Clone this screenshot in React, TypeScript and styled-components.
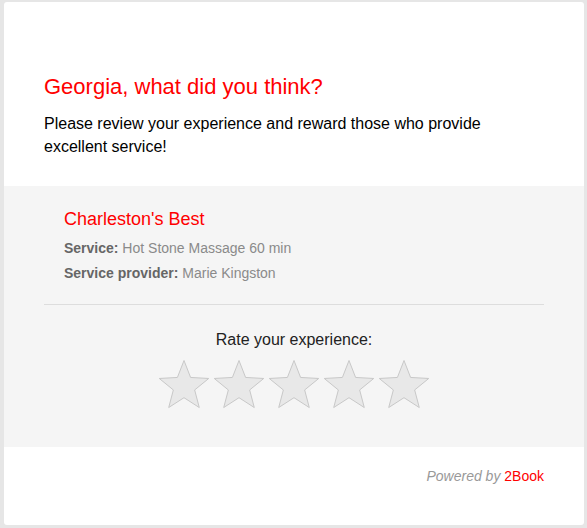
import React from 'react';
import styled, { createGlobalStyle } from 'styled-components';

const GlobalStyle = createGlobalStyle`
  html, body {
    margin: 0;
    padding: 0;
    background: #e6e6e6;
  }
  body {
    padding: 2px 0 0 4px;
    font-family: "Liberation Sans", Arial, sans-serif;
  }
`;

const Card = styled.div`
  width: 580px;
  height: 523px;
  background: #fff;
  border-radius: 3px;
  display: flex;
  flex-direction: column;
  overflow: hidden;
`;

const Header = styled.div`
  padding: 72px 40px 28px;
`;

const Title = styled.h1`
  margin: 0 0 12px;
  font-size: 22px;
  font-weight: normal;
  line-height: 26px;
  color: #ff0000;
`;

const Intro = styled.p`
  margin: 0;
  font-size: 16px;
  line-height: 23px;
  color: #000;
`;

const Details = styled.div`
  background: #f5f5f5;
  padding: 22px 40px 37px;
`;

const Business = styled.div`
  padding: 0 20px 18px;
  border-bottom: 1px solid #dddddd;
`;

const BusinessName = styled.h2`
  margin: 0 0 6px;
  font-size: 18px;
  font-weight: normal;
  line-height: 22px;
  color: #ff0000;
`;

const InfoRow = styled.div`
  font-size: 14px;
  line-height: 25px;
  color: #8a8a8a;
`;

const Label = styled.b`
  color: #666;
`;

const RateBlock = styled.div`
  padding-top: 25px;
  display: flex;
  flex-direction: column;
  align-items: center;
`;

const RateTitle = styled.div`
  font-size: 16px;
  line-height: 20px;
  color: #222;
  margin-bottom: 10px;
`;

const Stars = styled.div`
  display: flex;
  gap: 3px;
`;

const StarButton = styled.button`
  border: none;
  background: none;
  padding: 0;
  width: 52px;
  height: 50px;
  cursor: pointer;
  display: block;
`;

const Footer = styled.div`
  flex: 1;
  padding: 20px 40px;
  text-align: right;
  font-size: 14px;
  line-height: 18px;
`;

const Powered = styled.span`
  font-style: italic;
  color: #999;
`;

const Brand = styled.span`
  color: #ff0000;
`;

function Star() {
  const pts: string[] = [];
  for (let i = 0; i < 10; i++) {
    const r = i % 2 === 0 ? 26 : 11.2;
    const a = (Math.PI / 5) * i - Math.PI / 2;
    pts.push(`${(26 + r * Math.cos(a)).toFixed(2)},${(26.5 + r * Math.sin(a)).toFixed(2)}`);
  }
  return (
    <svg width="52" height="50" viewBox="0 0 52 50">
      <polygon points={pts.join(' ')} fill="#e8e8e8" stroke="#c8c8c8" strokeWidth="1" strokeLinejoin="round" />
    </svg>
  );
}

export default function App() {
  return (
    <>
      <GlobalStyle />
      <Card>
        <Header>
          <Title>Georgia, what did you think?</Title>
          <Intro>
            Please review your experience and reward those who provide
            <br />
            excellent service!
          </Intro>
        </Header>
        <Details>
          <Business>
            <BusinessName>Charleston's Best</BusinessName>
            <InfoRow>
              <Label>Service:</Label> Hot Stone Massage 60 min
            </InfoRow>
            <InfoRow>
              <Label>Service provider:</Label> Marie Kingston
            </InfoRow>
          </Business>
          <RateBlock>
            <RateTitle>Rate your experience:</RateTitle>
            <Stars>
              {[1, 2, 3, 4, 5].map((n) => (
                <StarButton key={n} aria-label={`${n} star`}>
                  <Star />
                </StarButton>
              ))}
            </Stars>
          </RateBlock>
        </Details>
        <Footer>
          <Powered>Powered by </Powered>
          <Brand>2Book</Brand>
        </Footer>
      </Card>
    </>
  );
}
